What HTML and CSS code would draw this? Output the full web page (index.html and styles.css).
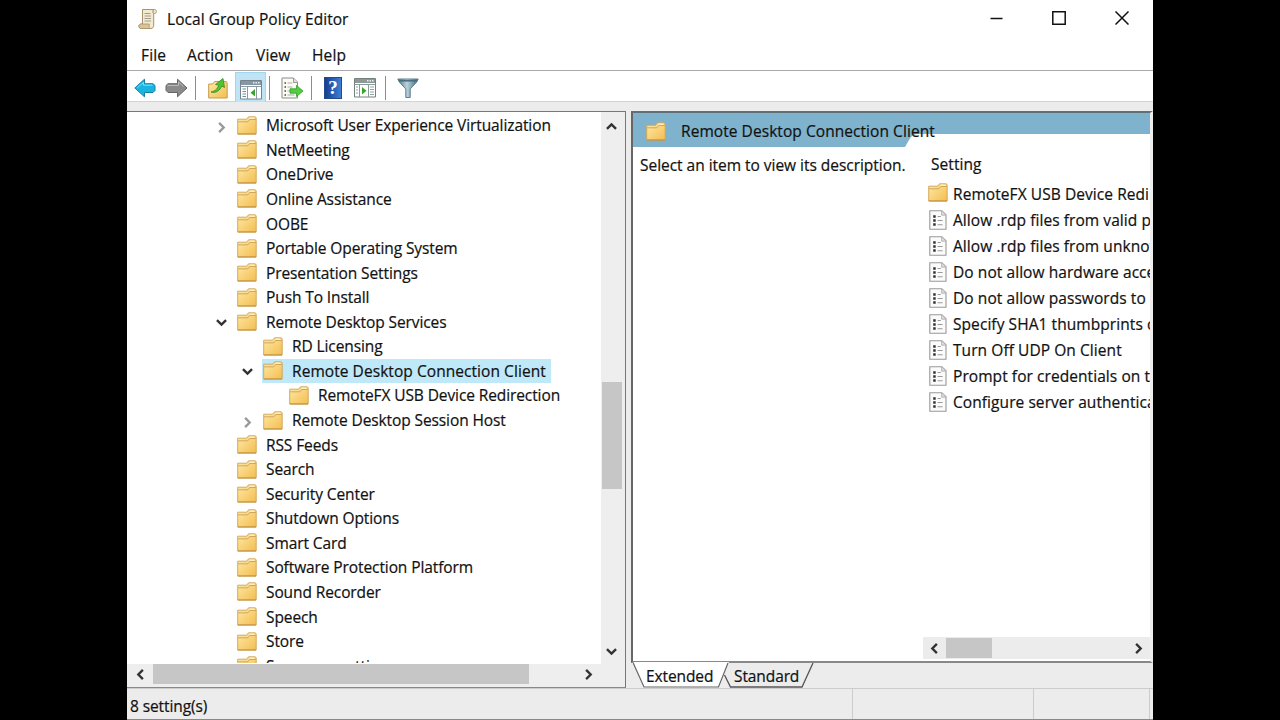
FILE: index.html
```html
<!DOCTYPE html>
<html lang="en">
<head>
  <meta charset="UTF-8">
  <title>Local Group Policy Editor</title>
  <link rel="stylesheet" href="styles.css">
</head>
<body>
  <!-- shared icons -->
  <svg class="defs" width="0" height="0">
    <defs>
      <linearGradient id="gold" x1="0" y1="0" x2="1" y2="1">
        <stop offset="0" stop-color="#ffe9a6"/>
        <stop offset="1" stop-color="#f3bd50"/>
      </linearGradient>
      <linearGradient id="steel" x1="0" y1="0" x2="1" y2="0">
        <stop offset="0" stop-color="#4f7486"/>
        <stop offset=".45" stop-color="#b9d3dc"/>
        <stop offset="1" stop-color="#3f6678"/>
      </linearGradient>
    </defs>
    <symbol id="folder" viewBox="0 0 20 19">
      <path d="M.7 3.200h9l1.800-2.400h6.800l.9 1.200v16H.7z" fill="url(#gold)" stroke="#cfa452" stroke-width=".9"/>
      <path d="M1 5.800h9.800l2-2.300h6" fill="none" stroke="#c49c50" stroke-width=".8"/>
      <path d="M12.600 2.200h5" stroke="#fff6d8" stroke-width="1.200"/>
      <path d="M.8 18h18.200" stroke="#c08f3c" stroke-width="1"/>
    </symbol>
    <symbol id="policy" viewBox="0 0 18 20">
      <path d="M.8.8h12l4.200 4v14.400H.8z" fill="#fbfbfb" stroke="#999" stroke-width="1.100"/>
      <path d="M12.600.8v4.400H17" fill="#ddd" stroke="#aaa" stroke-width=".8"/>
      <path d="M4.200 5.200h2.500v2.500H4.200zM4.200 9.200h2.500v2.500H4.200zM4.200 13.300h2.500v2.500H4.200z" fill="#333"/>
      <path d="M8.600 6.500h3.200M8.600 10.500h5M8.600 14.700h5" stroke="#999" stroke-width="1.100"/>
    </symbol>
    <symbol id="chev" viewBox="0 0 12 12">
      <path d="M3.800 1.800L8 6l-4.200 4.200" fill="none" stroke="currentColor" stroke-width="2.200"/>
    </symbol>
  </svg>

  <div class="window">
    <div class="titlebar">
      <svg class="app-icon" width="20" height="22" viewBox="0 0 20 22">
        <path d="M4.500 1.500h12c2.500 0 2.500 4 0 4h-.8v11.500c0 2.500-1 3.500-3 3.500H3.200c-3 0-3-4.500 0-4.500h1.300z" fill="#f3ead2" stroke="#a8936d"/>
        <path d="M3.200 16h8.300c-.8 1.500-.5 3.500 1 4.500H3.200c-3 0-3-4.500 0-4.500z" fill="#d9c49a" stroke="#a8936d" stroke-width=".8"/>
        <path d="M16 1.500c-1.600.5-1.600 3.500-.3 4" fill="#d9c49a" stroke="#a8936d"/>
        <path d="M6.500 5.500h6M6.500 8h6.500M6.500 10.500h6.500M6.500 13h6.500" stroke="#a49a8a" stroke-width="1"/>
      </svg>
      <span class="title">Local Group Policy Editor</span>
      <div class="controls">
        <svg width="14" height="14"><path d="M1.500 7.500h12" stroke="#111" stroke-width="1.500"/></svg>
        <svg width="14" height="14"><path d="M.8.8h12.400v12.400H.8z" fill="none" stroke="#111" stroke-width="1.500"/></svg>
        <svg width="14" height="14"><path d="M.5.500l13 13M13.500.500l-13 13" stroke="#111" stroke-width="1.500"/></svg>
      </div>
    </div>

    <div class="menubar">
      <span class="m-file">File</span>
      <span class="m-action">Action</span>
      <span class="m-view">View</span>
      <span class="m-help">Help</span>
    </div>

    <div class="toolbar">
      <svg class="t-back" width="22" height="20"><path d="M.8 10L10.500 1.200v4.500H19l2 1.800v5L19 14.500h-8.500v4.300z" fill="#19b5df" stroke="#1580a5"/><path d="M3.500 9.500l6-5v2.700h9" fill="none" stroke="#7fe0f5"/></svg>
      <svg class="t-fwd" width="23" height="20"><path d="M22 10L12.500 1.200v4.500H3L1 7.500v5l2 2h9.500v4.300z" fill="#8b8b8b" stroke="#666"/><path d="M2.500 7.500h11V4l5 4.500" fill="none" stroke="#bbb"/></svg>
      <i class="sep s1"></i>
      <svg class="t-up" width="20" height="22"><path d="M.7 7h4l2-2.500h11.500l1 1.500v15H.7z" fill="url(#gold)" stroke="#c79b4c"/><path d="M3 15c5-1 7-4 7.500-7l-3-.5L15 1.500l1.500 9-2.800-1.500C12 13.500 8 16.500 3 15z" fill="#52c234" stroke="#2f8f1d" stroke-width=".8"/></svg>
      <span class="pressed">
        <svg width="22" height="20"><path d="M.5.500h21v18.500H.5z" fill="#fff" stroke="#73828c"/><path d="M1 1h20v4H1z" fill="#8797a1"/><path d="M13 2.800h7" stroke="#e9eef1" stroke-width="1.500" stroke-dasharray="1.500 1"/><path d="M.5 6.500h21M7.500 6.500v12.500M16.500 6.500v12.500" stroke="#8b99a2"/><path d="M2.500 9h3.500M2.500 11.500h3.500M2.500 14h3.500M2.500 16.500h3.500" stroke="#6a8aa5"/><path d="M15 9v7.500l-4.500-3.700z" fill="#35a52b"/></svg>
      </span>
      <i class="sep s2"></i>
      <svg class="t-export" width="23" height="22"><path d="M1 1h11.500l4 4v16H1z" fill="#fcfaf2" stroke="#8b8b84"/><path d="M12.500 1v4.500h4" fill="#e4e1d4" stroke="#999"/><path d="M3.500 6h1.500M3.500 10h1.500M3.500 14h1.500M3.500 18h1.500" stroke="#444" stroke-width="1.400"/><path d="M6.500 6h5M6.500 10h5M6.500 14h5M6.500 18h7" stroke="#aaa"/><path d="M9 11.800h6.500V8.500L22 14l-6.500 5.500v-3.300H9z" fill="#52cf3d" stroke="#2d9a24" stroke-width=".8"/></svg>
      <i class="sep s3"></i>
      <span class="t-help">?</span>
      <svg class="t-pane" width="22" height="20"><path d="M.5.500h21v18.500H.5z" fill="#fff" stroke="#73807f"/><path d="M1 1h20v4H1z" fill="#8d9999"/><path d="M13 2.800h7" stroke="#e9eef1" stroke-width="1.500" stroke-dasharray="1.500 1"/><path d="M.5 6.500h21M5.500 6.500v12.500M14.500 6.500v12.500" stroke="#8b9999"/><path d="M16 9h4M16 11.500h4M16 14h4M16 16.500h4M2 9h2M2 12h2M2 15h2" stroke="#8aa5a5"/><path d="M8 9v7.500l4.500-3.700z" fill="#35a52b"/></svg>
      <i class="sep s4"></i>
      <svg class="t-filter" width="22" height="21"><path d="M.8 1h20.400l-1.500 3-6.500 7v8.500h-4.400V11L2.300 4z" fill="url(#steel)" stroke="#5d7f8e"/><path d="M2 2.800h18" stroke="#466b7d" stroke-width="1.500"/></svg>
    </div>

    <div class="main">
      <div class="left-pane">
        <div class="tree-row">
          <div class="tree">
            <div class="node"><svg class="exp closed"><use href="#chev"/></svg><svg class="folder"><use href="#folder"/></svg><span>Microsoft User Experience Virtualization</span></div>
            <div class="node"><i class="exp"></i><svg class="folder"><use href="#folder"/></svg><span>NetMeeting</span></div>
            <div class="node"><i class="exp"></i><svg class="folder"><use href="#folder"/></svg><span>OneDrive</span></div>
            <div class="node"><i class="exp"></i><svg class="folder"><use href="#folder"/></svg><span>Online Assistance</span></div>
            <div class="node"><i class="exp"></i><svg class="folder"><use href="#folder"/></svg><span>OOBE</span></div>
            <div class="node"><i class="exp"></i><svg class="folder"><use href="#folder"/></svg><span>Portable Operating System</span></div>
            <div class="node"><i class="exp"></i><svg class="folder"><use href="#folder"/></svg><span>Presentation Settings</span></div>
            <div class="node"><i class="exp"></i><svg class="folder"><use href="#folder"/></svg><span>Push To Install</span></div>
            <div class="node"><svg class="exp open"><use href="#chev"/></svg><svg class="folder"><use href="#folder"/></svg><span>Remote Desktop Services</span></div>
            <div class="node l1"><i class="exp"></i><svg class="folder"><use href="#folder"/></svg><span>RD Licensing</span></div>
            <div class="node l1 selected"><svg class="exp open"><use href="#chev"/></svg><div class="hl"><svg class="folder"><use href="#folder"/></svg><span>Remote Desktop Connection Client</span></div></div>
            <div class="node l2"><i class="exp"></i><svg class="folder"><use href="#folder"/></svg><span>RemoteFX USB Device Redirection</span></div>
            <div class="node l1"><svg class="exp closed"><use href="#chev"/></svg><svg class="folder"><use href="#folder"/></svg><span>Remote Desktop Session Host</span></div>
            <div class="node"><i class="exp"></i><svg class="folder"><use href="#folder"/></svg><span>RSS Feeds</span></div>
            <div class="node"><i class="exp"></i><svg class="folder"><use href="#folder"/></svg><span>Search</span></div>
            <div class="node"><i class="exp"></i><svg class="folder"><use href="#folder"/></svg><span>Security Center</span></div>
            <div class="node"><i class="exp"></i><svg class="folder"><use href="#folder"/></svg><span>Shutdown Options</span></div>
            <div class="node"><i class="exp"></i><svg class="folder"><use href="#folder"/></svg><span>Smart Card</span></div>
            <div class="node"><i class="exp"></i><svg class="folder"><use href="#folder"/></svg><span>Software Protection Platform</span></div>
            <div class="node"><i class="exp"></i><svg class="folder"><use href="#folder"/></svg><span>Sound Recorder</span></div>
            <div class="node"><i class="exp"></i><svg class="folder"><use href="#folder"/></svg><span>Speech</span></div>
            <div class="node"><i class="exp"></i><svg class="folder"><use href="#folder"/></svg><span>Store</span></div>
            <div class="node"><i class="exp"></i><svg class="folder"><use href="#folder"/></svg><span>Sync your settings</span></div>
          </div>
          <div class="vscroll">
            <svg class="arrow up"><use href="#chev"/></svg>
            <div class="thumb"></div>
            <svg class="arrow down"><use href="#chev"/></svg>
          </div>
        </div>
        <div class="hscroll">
          <svg class="arrow left"><use href="#chev"/></svg>
          <div class="thumb"></div>
          <svg class="arrow"><use href="#chev"/></svg>
        </div>
      </div>

      <div class="right-side">
        <div class="right-pane">
          <div class="pane-head">
            <svg class="head-bg" width="517" height="34"><path d="M0 0h517v21H284q-5 0-8 6l-4 7H0z" fill="#7fb2cc"/></svg>
            <svg class="folder"><use href="#folder"/></svg>
            <span>Remote Desktop Connection Client</span>
          </div>
          <div class="pane-body">
            <div class="descr">Select an item to view its description.</div>
            <div class="list">
              <div class="col-head">Setting</div>
              <div class="item"><svg class="folder"><use href="#folder"/></svg><span>RemoteFX USB Device Redirection</span></div>
              <div class="item"><svg class="policy"><use href="#policy"/></svg><span>Allow .rdp files from valid publishers</span></div>
              <div class="item"><svg class="policy"><use href="#policy"/></svg><span>Allow .rdp files from unknown publishers</span></div>
              <div class="item"><svg class="policy"><use href="#policy"/></svg><span>Do not allow hardware accelerated decoding</span></div>
              <div class="item"><svg class="policy"><use href="#policy"/></svg><span>Do not allow passwords to be saved</span></div>
              <div class="item"><svg class="policy"><use href="#policy"/></svg><span>Specify SHA1 thumbprints of certificates</span></div>
              <div class="item"><svg class="policy"><use href="#policy"/></svg><span>Turn Off UDP On Client</span></div>
              <div class="item"><svg class="policy"><use href="#policy"/></svg><span>Prompt for credentials on the client</span></div>
              <div class="item"><svg class="policy"><use href="#policy"/></svg><span>Configure server authentication for client</span></div>
              <div class="list-scroll">
                <svg class="arrow left"><use href="#chev"/></svg>
                <div class="thumb"></div>
                <svg class="arrow"><use href="#chev"/></svg>
              </div>
            </div>
          </div>
        </div>
        <div class="tabs">
          <svg class="tab-shape" width="190" height="26">
            <path d="M88 25.500L95 1h86L170 25.500z" fill="#ececec"/>
            <path d="M0 0l11 25.500h75L96 0z" fill="#fff"/>
            <path d="M0 .500l11 24.500h74.500L95 1" fill="none" stroke="#666" stroke-width="1.200"/>
            <path d="M91.500 13l6 12h71.500L180 1" fill="none" stroke="#555" stroke-width="1.300"/>
          </svg>
          <span class="tab-ext">Extended</span>
          <span class="tab-std">Standard</span>
        </div>
      </div>
    </div>

    <div class="statusbar">
      <div class="status-text">8 setting(s)</div>
      <div class="cell c1"></div>
      <div class="cell c2"></div>
    </div>
  </div>
</body>
</html>
```
FILE: styles.css
```css
* {
  box-sizing: border-box;
}
body {
  margin: 0;
  height: 720px;
  overflow: hidden;
  background: #000;
  color: #111;
  font-family: "Open Sans", "Noto Sans", sans-serif;
  font-size: 15.5px;
  letter-spacing: -0.1px;
  -webkit-text-stroke: 0.2px #111;
  white-space: nowrap;
}
svg {
  display: block;
  flex: none;
}
.defs {
  position: absolute;
}
.window {
  width: 1026px;
  height: 720px;
  margin-left: 127px;
  background: #fff;
  display: flex;
  flex-direction: column;
}

/* title and menu */
.titlebar {
  height: 38px;
  display: flex;
  align-items: center;
  padding-left: 11px;
}
.title {
  margin-left: 9px;
  letter-spacing: 0.05px;
}
.controls {
  display: flex;
  gap: 49px;
  margin-left: auto;
  padding-right: 24px;
  padding-bottom: 2px;
}
.menubar {
  height: 33px;
  border-bottom: 1px solid #aaa;
  display: flex;
  align-items: center;
  padding: 1px 0 0 14px;
  letter-spacing: 0.15px;
}
.m-file { width: 46px; }
.m-action { width: 69px; }
.m-view { width: 56px; }

/* toolbar */
.toolbar {
  height: 31px;
  border-bottom: 1px solid #d4d4d4;
  display: flex;
  align-items: center;
  padding: 4px 0 0 7px;
}
.t-fwd { margin-left: 9px; }
.sep {
  width: 1px;
  height: 24px;
  background: #8c8c8c;
}
.s1 { margin-left: 7px; }
.t-up { margin-left: 12px; }
.pressed {
  width: 31px;
  height: 30px;
  margin: -3px 0 0 7px;
  padding: 7px 0 0 5px;
  background: #c0e4f5;
  border: 1px solid #a2d7ee;
  border-bottom: 0;
}
.pressed svg { margin-left: -1px; }
.s2 { margin-left: 3px; }
.t-export { margin-left: 11px; }
.s3 { margin-left: 7px; }
.t-help {
  width: 18px;
  height: 22px;
  margin-left: 12px;
  background: linear-gradient(90deg, #173d91, #3c7fd6);
  border: 1px solid #234a8b;
  color: #fff;
  font: bold 19px/20px "Liberation Serif", serif;
  text-align: center;
  -webkit-text-stroke: 0;
}
.t-pane { margin-left: 12px; }
.s4 { margin-left: 9px; }
.t-filter { margin-left: 11px; }

.main {
  height: 586px;
  padding-top: 9px;
  background: #ececec;
  display: flex;
}

/* tree */
.left-pane {
  width: 499px;
  height: 577px;
  border-top: 1px solid #777;
  border-right: 1px solid #777;
  border-bottom: 1px solid #888;
  background: #fff;
}
.tree-row {
  height: 552px;
  display: flex;
}
.tree {
  width: 474px;
  height: 551px;
  overflow: hidden;
  padding: 1px 0 0 88px;
}
.node {
  height: 24.57px;
  display: flex;
  align-items: center;
}
.node.l1 { padding-left: 26px; }
.node.l2 { padding-left: 52px; }
.node span { margin-left: 9px; }
.exp {
  width: 13px;
  height: 13px;
  margin-right: 9px;
  color: #999;
}
.exp.closed { margin-top: 4px; }
.exp.open {
  transform: rotate(90deg);
  margin-top: 2px;
  color: #333;
}
.folder {
  width: 20px;
  height: 19px;
}
.hl {
  height: 24px;
  display: flex;
  align-items: center;
  margin-left: -1px;
  padding: 0 5px 0 1px;
  background: #bfe8f8;
  letter-spacing: 0.06px;
}

/* scrollbars */
.arrow {
  width: 13px;
  height: 13px;
  color: #333;
}
.arrow.left { transform: rotate(180deg); }
.arrow.up { transform: rotate(-90deg); }
.arrow.down { transform: rotate(90deg); }
.thumb { background: #c6c6c6; }
.vscroll {
  width: 24px;
  background: #eee;
  padding: 8px 4px 6px 1px;
  display: flex;
  flex-direction: column;
  align-items: center;
}
.vscroll .thumb {
  width: 20px;
  height: 107px;
  margin-top: 249px;
  margin-bottom: auto;
}
.hscroll {
  height: 23px;
  background: #eee;
  display: flex;
  align-items: center;
  padding: 0 30px 3px 7px;
}
.hscroll .thumb {
  width: 376px;
  height: 20px;
  margin: 0 auto 0 6px;
}

/* details */
.right-side {
  width: 522px;
  margin-left: 5px;
}
.right-pane {
  height: 552px;
  border-top: 2px solid #607078;
  border-left: 2px solid #666;
  border-bottom: 2px solid #888;
  border-right: 3px solid #eee;
  background: #fff;
}
.pane-head {
  position: relative;
  height: 34px;
  display: flex;
  align-items: center;
  padding: 2px 0 0 13px;
  letter-spacing: 0.06px;
}
.pane-head .folder,
.pane-head span {
  position: relative;
}
.pane-head span { margin-left: 15px; }
.head-bg {
  position: absolute;
  left: 0;
  top: 0;
}
.pane-body {
  height: 514px;
  display: flex;
}
.descr {
  width: 290px;
  padding: 7px 0 0 7px;
  letter-spacing: -0.03px;
}
.list {
  width: 227px;
  overflow: hidden;
  display: flex;
  flex-direction: column;
  letter-spacing: 0.07px;
}
.col-head {
  height: 34px;
  padding: 6px 0 0 8px;
}
.item {
  height: 26px;
  display: flex;
  align-items: center;
  padding-left: 5px;
}
.item .folder { margin-top: -3px; }
.item span {
  margin-left: 5px;
  padding-bottom: 1px;
}
.policy {
  width: 18px;
  height: 20px;
  margin: 0 1px;
}
.list-scroll {
  height: 22px;
  margin-top: auto;
  margin-bottom: 2px;
  background: #ececec;
  display: flex;
  align-items: center;
  padding: 0 5px;
}
.list-scroll .thumb {
  width: 46px;
  height: 20px;
  margin: 0 auto 0 5px;
}

.tabs {
  position: relative;
  height: 25px;
  display: flex;
  align-items: center;
  padding-left: 15px;
}
.tab-shape {
  position: absolute;
  left: 2px;
  top: -1px;
}
.tabs span { position: relative; }
.tab-ext { width: 88px; }

/* status */
.statusbar {
  height: 32px;
  border-top: 1px solid #ccc;
  border-bottom: 1px solid #888;
  background: #ececec;
  display: flex;
  align-items: center;
}
.status-text {
  width: 725px;
  padding: 3px 0 0 3px;
}
.cell {
  align-self: stretch;
  border-left: 1px solid #ccc;
}
.c1 { width: 181px; }
.c2 {
  width: 117px;
  border-right: 1px solid #ccc;
}
```
